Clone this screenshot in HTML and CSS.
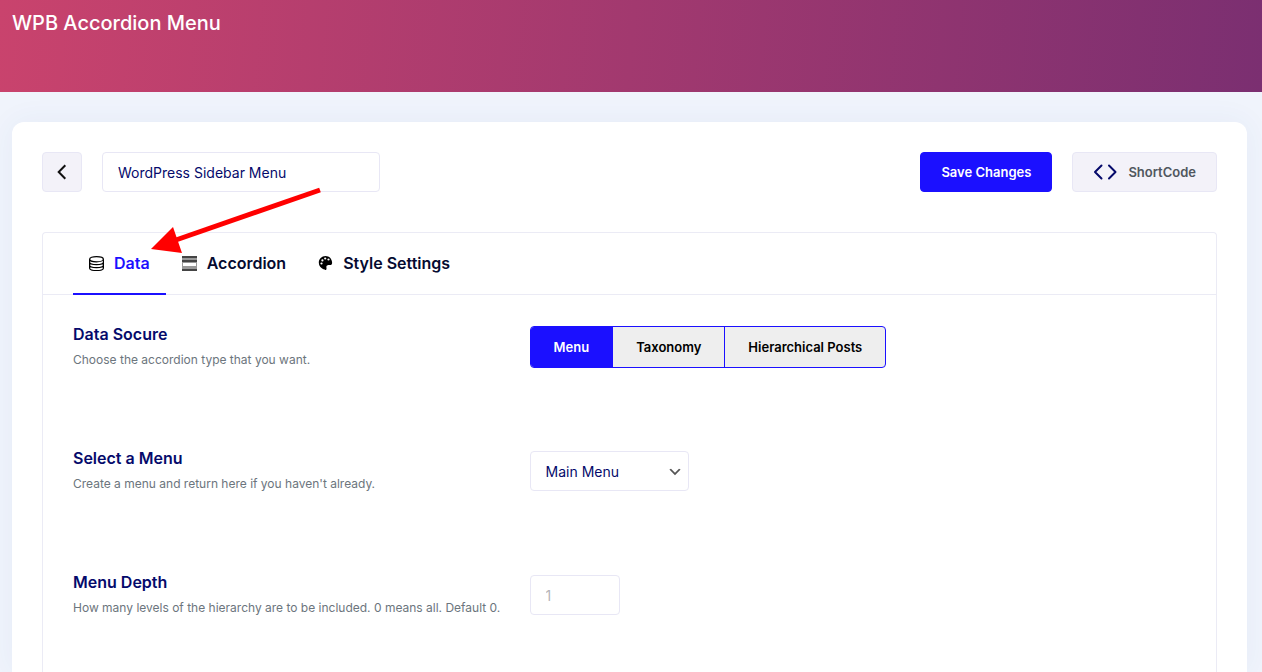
FILE: index.html
```html
<!DOCTYPE html>
<html lang="en">
<head>
<meta charset="utf-8">
<title>WPB Accordion Menu</title>
<link rel="stylesheet" href="styles.css">
</head>
<body>
<header class="banner">
  <h1 class="banner-title">WPB Accordion Menu</h1>
</header>
<main class="card">
  <div class="toolbar">
    <button class="btn btn-back" type="button" aria-label="Back">
      <svg width="16" height="16" viewBox="0 0 16 16" fill="none" stroke="#111" stroke-width="2" aria-hidden="true"><path d="M11.3 1.3 4.7 8l6.6 6.7"/></svg>
    </button>
    <input class="field name-field" type="text" value="WordPress Sidebar Menu" aria-label="Menu name">
    <div class="actions">
      <button class="btn btn-primary" type="button">Save Changes</button>
      <button class="btn btn-light" type="button">
        <svg width="24" height="16" viewBox="0 0 24 16" fill="none" stroke="#050a6b" stroke-width="2" stroke-linecap="round" stroke-linejoin="round" aria-hidden="true"><path d="M8.500 1.500 2 8l6.500 6.500M16 1.500 22.500 8 16 14.500"/></svg>
        ShortCode
      </button>
    </div>
  </div>
  <section class="panel">
    <nav class="tabs" role="tablist">
      <button class="tab tab-active" type="button" role="tab" aria-selected="true">
        <svg class="tab-icon" viewBox="0 -1 16 16" fill="none" stroke="#000" stroke-width="1.200" aria-hidden="true"><ellipse cx="7.500" cy="3.200" rx="6.900" ry="2.600"/><path d="M.6 3.200v8.700c0 1.500 3.100 2.600 6.900 2.600s6.900-1.100 6.900-2.600V3.200M.6 6c0 1.500 3.100 2.600 6.900 2.600S14.400 7.500 14.400 6M.6 9c0 1.500 3.100 2.600 6.900 2.600s6.900-1.100 6.900-2.600"/></svg>
        Data
      </button>
      <button class="tab" type="button" role="tab" aria-selected="false">
        <svg class="tab-icon" viewBox="0 -1 16 16" shape-rendering="crispEdges" aria-hidden="true"><path fill="#999" d="M0 0h15v15H0z"/><path fill="#444" d="M0 0h15v2H0zM0 4h15v2H0zM0 13h15v2H0z"/><path fill="#fff" d="M1 7h13v3H1z"/></svg>
        Accordion
      </button>
      <button class="tab" type="button" role="tab" aria-selected="false">
        <svg class="tab-icon" viewBox="0 0 16 16" aria-hidden="true"><path fill="#000" d="M7.500 1C3.700 1 .8 4 .8 7.700c0 3.300 2.300 5.400 4.200 6.200.9.400 1.100 0 1.500.7.600.8 1.800.3 2-.7.200-.9-.5-2.200.2-3.100.8-1 2.100-.8 3.400-.8 1.600 0 2.100-1.100 2-2.600C13.900 3.800 11.200 1 7.500 1z"/><g fill="#fff"><circle cx="3.500" cy="8.500" r="1.100"/><circle cx="4.400" cy="5.400" r="1.100"/><circle cx="7.200" cy="3.500" r="1.100"/><circle cx="10.500" cy="4.500" r="1.100"/></g></svg>
        Style Settings
      </button>
    </nav>
    <form class="settings">
      <div class="setting">
        <div>
          <h2 class="setting-title" id="source-title">Data Socure</h2>
          <p class="setting-help">Choose the accordion type that you want.</p>
        </div>
        <div class="segmented" role="group" aria-labelledby="source-title">
          <button class="segment segment-active" type="button">Menu</button>
          <button class="segment" type="button">Taxonomy</button>
          <button class="segment" type="button">Hierarchical Posts</button>
        </div>
      </div>
      <div class="setting">
        <div>
          <label class="setting-title" for="menu">Select a Menu</label>
          <p class="setting-help">Create a menu and return here if you haven't already.</p>
        </div>
        <div class="select-wrap">
          <select class="field select" id="menu"><option>Main Menu</option></select>
          <svg class="select-arrow" width="16" height="16" viewBox="0 0 20 20" aria-hidden="true"><path fill="#555" d="m5 6 5 5 5-5 2 1-7 7-7-7z"/></svg>
        </div>
      </div>
      <div class="setting">
        <div>
          <label class="setting-title" for="depth">Menu Depth</label>
          <p class="setting-help">How many levels of the hierarchy are to be included. 0 means all. Default 0.</p>
        </div>
        <input class="field depth" id="depth" type="text" inputmode="numeric" placeholder="1">
      </div>
    </form>
  </section>
  <svg class="pointer" width="170" height="68" viewBox="0 0 170 68" aria-hidden="true"><path stroke="#f00" stroke-width="5" d="M169 3 22 54"/><path fill="#f00" d="M0 62 22 40 31 66z"/></svg>
</main>
</body>
</html>
```
FILE: styles.css
```css
* {
  box-sizing: border-box;
}

body {
  display: flex;
  flex-direction: column;
  min-height: 100vh;
  margin: 0;
  background: #f0f4fc;
  color: #050a6b;
  font-family: Inter, "Liberation Sans", sans-serif;
}

button,
input,
select {
  margin: 0;
  font-family: inherit;
}

.banner {
  height: 92px;
  padding: 10px 12px;
  background: linear-gradient(95deg, #c9436d, #7b2f71);
}

.banner-title {
  margin: 0;
  color: #fff;
  font-size: 20px;
  line-height: 26px;
  font-weight: 500;
}

.card {
  position: relative;
  display: flex;
  flex: 1;
  flex-direction: column;
  margin: 30px 15px 0 12px;
  padding: 30px 30px 0;
  border-radius: 12px 12px 0 0;
  background: #fff;
  box-shadow: 0 0 30px rgba(50, 80, 150, 0.06);
}

.toolbar {
  display: flex;
  gap: 20px;
  margin-bottom: 40px;
}

.actions {
  display: flex;
  gap: 20px;
  margin-left: auto;
}

.btn {
  display: flex;
  align-items: center;
  justify-content: center;
  gap: 11px;
  height: 40px;
  padding: 0 20px;
  border: 1px solid #e8e7f5;
  border-radius: 4px;
  background: #f3f2f9;
  color: #50575e;
  font-size: 13px;
  font-weight: 600;
}

.btn-back {
  width: 40px;
  padding: 0;
}

.btn-primary {
  border-color: #1b10ff;
  background: #1b10ff;
  color: #fff;
}

.field {
  height: 40px;
  padding: 0 15px;
  border: 1px solid #e8e7f5;
  border-radius: 4px;
  background: #fff;
  color: #050a6b;
  font-size: 14px;
}

.name-field {
  width: 278px;
}

.panel {
  flex: 1;
  border: 1px solid #ebebf5;
  border-bottom: 0;
  border-radius: 4px 4px 0 0;
}

.tabs {
  display: flex;
  height: 62px;
  padding: 0 30px;
  border-bottom: 1px solid #ebebf5;
}

.tab {
  display: flex;
  align-items: center;
  gap: 9px;
  height: 62px;
  padding: 0 16px;
  border: 0;
  border-bottom: 2px solid transparent;
  background: none;
  color: #050a30;
  font-size: 16px;
  font-weight: 600;
}

.tab-active {
  border-bottom-color: #1b10ff;
  color: #1b10ff;
}

.tab-icon {
  width: 16px;
  height: 16px;
}

.settings {
  display: grid;
  gap: 72px;
  padding: 26px 30px;
}

.setting {
  display: grid;
  grid-template-columns: 16fr 23fr;
  align-items: center;
  justify-items: start;
}

.setting-title {
  display: block;
  margin: 0;
  font-size: 16px;
  line-height: 26px;
  font-weight: 600;
}

.setting-help {
  margin: 0;
  color: #6c757d;
  font-size: 12px;
  line-height: 26px;
  white-space: nowrap;
}

.segmented {
  display: flex;
  height: 42px;
  border: 1px solid #1b10ff;
  border-radius: 4px;
  background: #eee;
  overflow: hidden;
}

.segment {
  padding: 0 23px;
  border: 0;
  background: none;
  color: #000;
  font-size: 13px;
  font-weight: 600;
}

.segment + .segment {
  border-left: 1px solid #1b10ff;
}

.segment-active {
  background: #1b10ff;
  color: #fff;
}

.select-wrap {
  position: relative;
}

.select {
  width: 159px;
  appearance: none;
}

.select-arrow {
  position: absolute;
  top: 13px;
  right: 6px;
  pointer-events: none;
}

.depth {
  width: 90px;
}

.depth::placeholder {
  color: #b4b4b8;
}

.pointer {
  position: absolute;
  top: 65px;
  left: 139px;
  pointer-events: none;
}
```
